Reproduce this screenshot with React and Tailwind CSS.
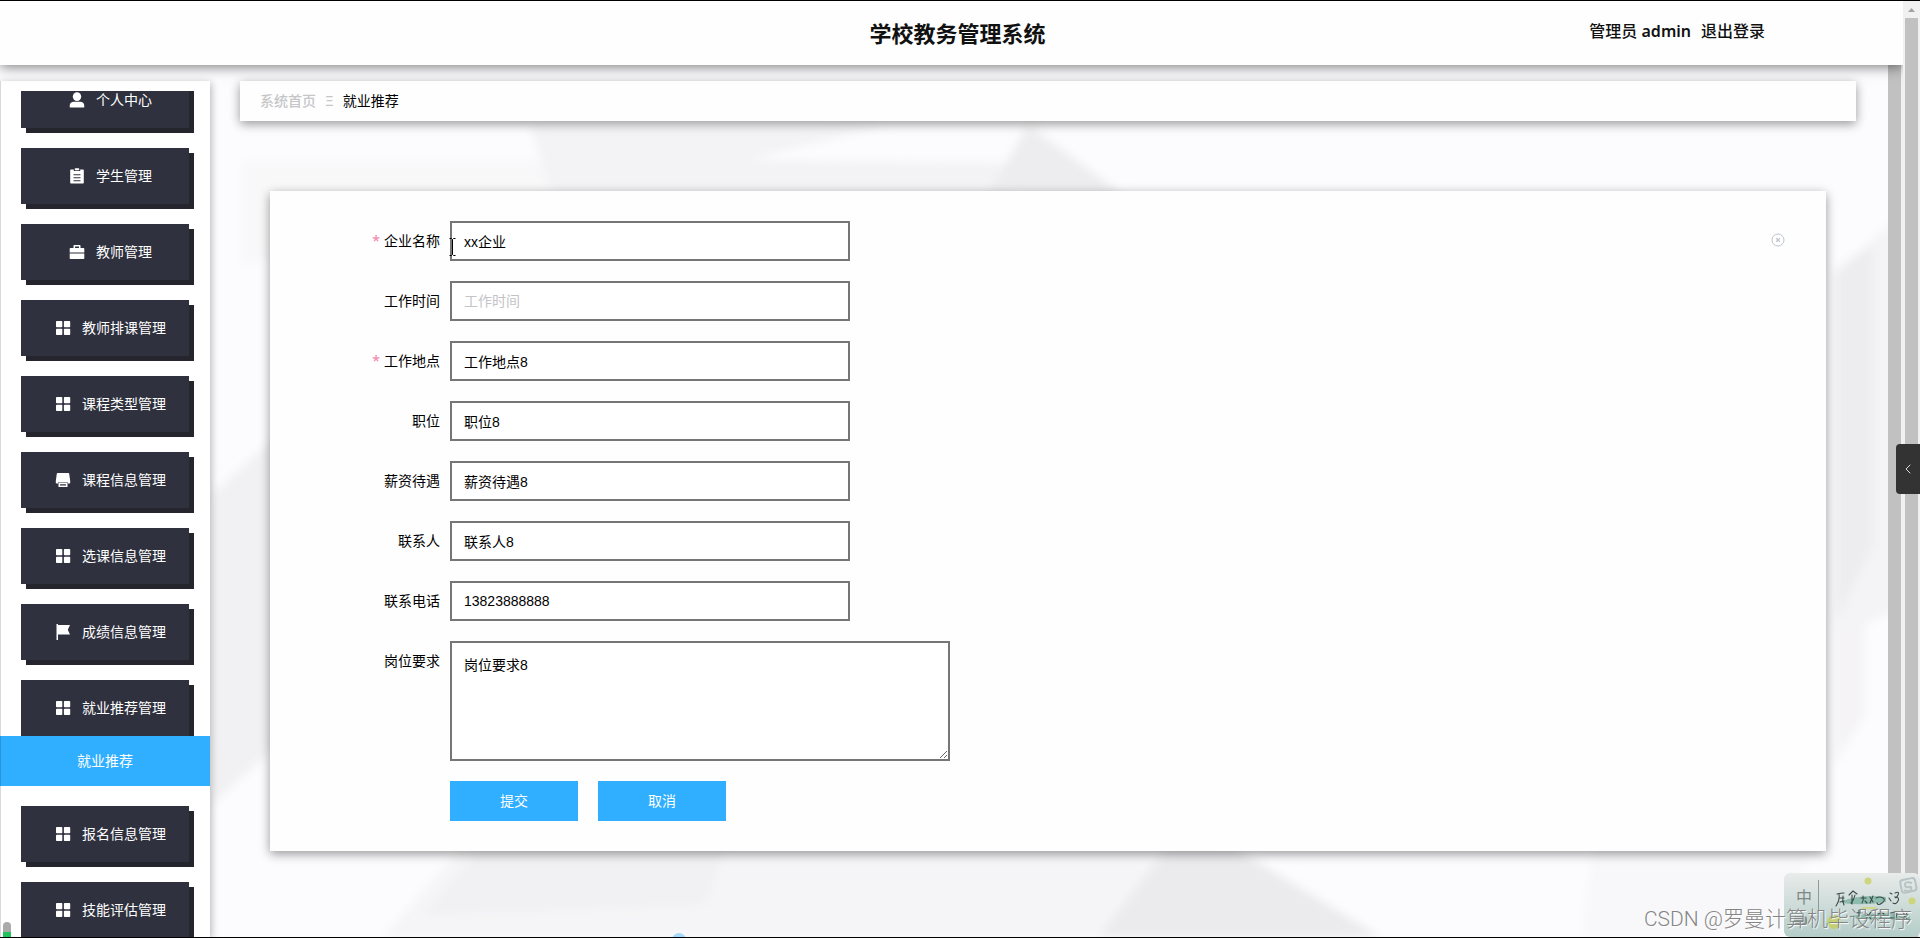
import { ChevronLeft } from 'lucide-react';

const SANS = "font-['Noto_Sans','Noto_Sans_CJK_SC',sans-serif]";

function Grid() {
  return (
    <svg viewBox="0 0 16 16" className="size-4 shrink-0" fill="currentColor" aria-hidden="true">
      <rect x="1" y="1" width="6.3" height="6.3" rx="0.8" />
      <rect x="8.9" y="1" width="6.3" height="6.3" rx="0.8" />
      <rect x="1" y="8.7" width="6.3" height="6.3" rx="0.8" />
      <rect x="8.9" y="8.7" width="6.3" height="6.3" rx="0.8" />
    </svg>
  );
}

function User() {
  return (
    <svg viewBox="0 0 16 16" className="size-4 shrink-0" fill="currentColor" aria-hidden="true">
      <ellipse cx="8" cy="4.6" rx="4.2" ry="4.4" />
      <path d="M0.8 15.5v-2.2c0-2.2 1.8-3.6 4-3.6h6.4c2.2 0 4 1.4 4 3.6v2.2z" />
    </svg>
  );
}

function Clipboard() {
  return (
    <svg viewBox="0 0 16 16" className="size-4 shrink-0" fill="currentColor" aria-hidden="true">
      <path
        fillRule="evenodd"
        d="M2 1.5h2.8v1.5h6.4v-1.5h2.8a.8.8 0 0 1 .8.8v12.4a.8.8 0 0 1-.8.8h-12a.8.8 0 0 1-.8-.8v-12.4a.8.8 0 0 1 .8-.8zM4.500 6.200v1h7v-1zM4.500 9.200v1h7v-1zM4.500 12.200v1h7v-1z"
      />
      <rect x="5.8" y="0.3" width="4.4" height="1.9" rx="0.5" />
    </svg>
  );
}

function Briefcase() {
  return (
    <svg viewBox="0 0 16 16" className="size-4 shrink-0" fill="currentColor" aria-hidden="true">
      <path
        fillRule="evenodd"
        d="M4.5 4v-2.2a.8.8 0 0 1 .8-.8h5.4a.8.8 0 0 1 .8.8v2.2h3a.8.8 0 0 1 .8.8v3.7h-14.6v-3.7a.8.8 0 0 1 .8-.8zM6 4h4v-1.600h-4z"
      />
      <path d="M.7 9.5h14.6v4.7a.8.8 0 0 1-.8.8h-13a.8.8 0 0 1-.8-.8z" />
    </svg>
  );
}

function Printer() {
  return (
    <svg viewBox="0 0 16 16" className="size-4 shrink-0" fill="currentColor" aria-hidden="true">
      <path d="M2.6 1h10.8a.8.8 0 0 1 .8.7l1 7.3v1.8a.8.8 0 0 1-.8.8h-1.4v-1.1h-10v1.1h-1.4a.8.8 0 0 1-.8-.8v-1.8l1-7.3a.8.8 0 0 1 .8-.7z" />
      <path fillRule="evenodd" d="M3.500 11h9v4h-9zM5 12.200v1.200h6v-1.200z" />
    </svg>
  );
}

function Flag() {
  return (
    <svg viewBox="0 0 16 16" className="size-4 shrink-0" fill="currentColor" aria-hidden="true">
      <path d="M1.500 0h1.500v1h12l-2.200 4.700 2.200 4.800h-12v5.500h-1.500z" />
    </svg>
  );
}

const menu = [
  { label: '个人中心', Icon: User },
  { label: '学生管理', Icon: Clipboard },
  { label: '教师管理', Icon: Briefcase },
  { label: '教师排课管理', Icon: Grid },
  { label: '课程类型管理', Icon: Grid },
  { label: '课程信息管理', Icon: Printer },
  { label: '选课信息管理', Icon: Grid },
  { label: '成绩信息管理', Icon: Flag },
  { label: '就业推荐管理', Icon: Grid, child: '就业推荐' },
  { label: '报名信息管理', Icon: Grid },
  { label: '技能评估管理', Icon: Grid },
];

const fields = [
  { id: 'company', label: '企业名称', value: 'xx企业', required: true },
  { id: 'hours', label: '工作时间', value: '' },
  { id: 'place', label: '工作地点', value: '工作地点8', required: true },
  { id: 'position', label: '职位', value: '职位8' },
  { id: 'salary', label: '薪资待遇', value: '薪资待遇8' },
  { id: 'contact', label: '联系人', value: '联系人8' },
  { id: 'phone', label: '联系电话', value: '13823888888' },
];

function Backdrop() {
  return (
    <svg
      className="absolute inset-0 size-full"
      viewBox="0 0 1888 872"
      preserveAspectRatio="none"
      aria-hidden="true"
    >
      <defs>
        <filter id="soft">
          <feGaussianBlur stdDeviation="5" />
        </filter>
      </defs>
      <rect width="1888" height="872" fill="#fcfcfe" />
      <g filter="url(#soft)">
        <path d="M240 96 560 96 560 135 240 200z" fill="#f8f8f9" />
        <path d="M525 60 880 60 740 95 1010 98 1000 135 550 135z" fill="#f3f2f5" />
        <path d="M1020 60 1115 130 980 130z" fill="#ededf0" />
        <path d="M210 430 275 370 275 680 210 740z" fill="#f1f1f4" />
        <path d="M1888 150 1820 205 1820 700 1850 650 1850 560 1888 540z" fill="#f4f3f6" />
        <path d="M1858 180 1820 210 1820 560 1858 480z" fill="#ededf0" />
        <path d="M460 780 1160 780 1100 872 380 872z" fill="#f5f5f7" />
        <path d="M480 780 720 780 700 840 420 850z" fill="#f1f1f3" />
        <path d="M1160 780 1220 780 1370 872 1090 872z" fill="#ebebee" />
        <path d="M1580 780 1800 780 1760 872 1570 872z" fill="#f8f8fa" />
      </g>
    </svg>
  );
}

function Sidebar() {
  return (
    <nav className="relative mt-4 flex w-[210px] shrink-0 flex-col bg-white pt-2.5 shadow-[1px_2px_8px_rgba(0,0,0,0.3)]">
      <div className="flex min-h-0 flex-1 flex-col justify-start overflow-hidden">
        <ul className="-mt-[19px] flex flex-col gap-5">
          {menu.map(({ label, Icon, child }) => (
            <li key={label} className="shrink-0">
              <a
                href="#"
                className="mx-[21px] flex h-14 items-center justify-center gap-[11px] bg-[#2f313e] pl-[11px] text-sm text-white shadow-[5px_5px_0_#24252d]"
              >
                <Icon />
                <span>{label}</span>
              </a>
              {child && (
                <a
                  href="#"
                  className="relative flex h-[50px] items-center justify-center bg-[#30aeff] text-sm text-white"
                >
                  {child}
                </a>
              )}
            </li>
          ))}
        </ul>
      </div>
      <div className="absolute inset-y-0 left-0 w-px bg-black/15" />
      <div className="absolute bottom-0 left-[3px] h-[15px] w-2 rounded-t-full border-b-[5px] border-[#1fc25b] bg-[#aaa]" />
    </nav>
  );
}

function Form() {
  return (
    <form className="relative flex flex-col gap-5 bg-[#fefefe] p-[30px] pl-[60px] text-sm text-black shadow-[0_3px_10px_rgba(0,0,0,0.4)]">
      {fields.map((f) => (
        <div key={f.id} className="flex">
          <label htmlFor={f.id} className="w-[120px] pr-2.5 text-right leading-10">
            {f.required && <span className="mr-1 text-[#f283a5]">*</span>}
            {f.label}
          </label>
          <input
            id={f.id}
            defaultValue={f.value}
            placeholder={f.label}
            className="h-10 w-[400px] border-2 border-[#767676] bg-white px-3 font-['Liberation_Sans','Noto_Sans_CJK_SC',sans-serif] outline-none placeholder:text-[#c4c4c8]"
          />
        </div>
      ))}
      <div className="flex">
        <label htmlFor="requirements" className="w-[120px] pr-2.5 text-right leading-10">
          岗位要求
        </label>
        <textarea
          id="requirements"
          defaultValue="岗位要求8"
          className="h-[120px] w-[500px] border-2 border-[#767676] bg-white p-3 font-['Liberation_Sans','Noto_Sans_CJK_SC',sans-serif] outline-none"
        />
      </div>
      <div className="flex gap-5 pl-[120px]">
        <button type="submit" className="h-10 w-32 bg-[#30aeff] text-white">
          提交
        </button>
        <button type="button" className="h-10 w-32 bg-[#30aeff] text-white">
          取消
        </button>
      </div>
      <button type="button" aria-label="清空" className="absolute right-[41px] top-[42px] text-[#c0c4cc]">
        <svg viewBox="0 0 14 14" className="size-3.5" fill="none" stroke="currentColor" aria-hidden="true">
          <circle cx="7" cy="7" r="6" />
          <path d="M5.300 5.300l3.400 3.400M8.700 5.300l-3.400 3.400" strokeWidth="1.300" />
        </svg>
      </button>
      <svg viewBox="0 0 7 18" className="absolute left-[179px] top-[47px] h-[18px] w-[7px]" stroke="#000" fill="none" aria-hidden="true">
        <path d="M0.500 0.500h2l1 1 1-1h2M3.500 1.500v15M0.500 17.500h2l1-1 1 1h2" />
      </svg>
    </form>
  );
}

function InputMethodBar() {
  return (
    <div className="absolute bottom-0 right-0 z-20 h-16 w-[136px] overflow-hidden rounded-md">
      <svg viewBox="0 0 136 64" className="size-full" aria-hidden="true">
        <defs>
          <linearGradient id="ime" x1="0" y1="0" x2="0" y2="1">
            <stop offset="0" stopColor="#e8ebea" />
            <stop offset="1" stopColor="#b4cdc8" />
          </linearGradient>
        </defs>
        <rect width="136" height="64" rx="4" fill="url(#ime)" />
        <path d="M34.500 7v30" stroke="#8f9a98" />
        <path d="M58 28q20-7 44-4v5q-24 4-44 1zM66 43q28-5 60-1v4q-30 2-60-1z" fill="#8dbcae" />
        <g stroke="#3b4a46" fill="none" strokeWidth="1.1" strokeLinecap="round">
          <path d="M53 21q4-1 7-1M55 21q1 6-3 12M56 25h4M59 23q-1 5 1 9M56 29l4-1M65 22l4-4 4 3M68 22v9M71 22q-1 5-4 8M77 25h5M79 23q1 4-1 7M81 28l2 2M86 24l3 5M89 23l-3 7M92 25q4-2 7 0t-1 5-5 0M106 20l2 1M105 25l2 3M111 20q5-2 3 2t-3 2q5 0 3 4t-5 2" />
          <path d="M72 40q3-1 6 0M75 37v10M82 40l5 6M87 39l-6 8M94 41q4-2 6 0M97 38v9M106 40q4-1 7 0l-1 5h-6M119 39l4 7M123 40l-5 7" />
        </g>
        <circle cx="84" cy="8" r="3.500" fill="#cdd67c" />
        <circle cx="128" cy="28" r="3.500" fill="#cdd67c" />
        <circle cx="50" cy="49" r="7" fill="#c3cf72" />
        <path d="M78 35h14" stroke="#cfd78a" strokeWidth="2" />
        <rect x="10" y="43" width="13" height="9" rx="3" fill="#81908c" />
        <rect x="117" y="6" width="15" height="13" rx="3" fill="none" stroke="#b7c4c4" strokeWidth="2" transform="rotate(-12 124 13)" />
        <path d="M128 10q-7-2-7 1.500t4 2.500 1 4q-3 1-6-1" stroke="#b7c4c4" strokeWidth="2" fill="none" />
      </svg>
      <span className="absolute left-3 top-3 text-base leading-6 text-[#7d8886]">中</span>
    </div>
  );
}

export default function App() {
  return (
    <div className={`relative flex h-screen overflow-hidden border-y border-black bg-white ${SANS}`}>
      <div className="flex min-w-0 flex-1 flex-col">
        <header className="relative z-10 flex h-16 shrink-0 items-start bg-[#fefefe] text-[#111] shadow-[0_2px_12px_rgba(0,0,0,0.5)]">
          <h1 className="flex-1 pl-3 pt-4 text-center text-[22px] font-bold leading-8">学校教务管理系统</h1>
          <div className="absolute right-[138px] top-[18px] flex gap-2.5 text-base font-medium leading-6">
            <span>
              管理员 <span className="font-semibold">admin</span>
            </span>
            <a href="#">退出登录</a>
          </div>
        </header>
        <div className="relative flex min-h-0 flex-1">
          <Backdrop />
          <Sidebar />
          <main className="relative min-w-0 flex-1 pl-[30px] pr-8 pt-4">
            <div className="flex h-10 items-center bg-[#fefefe] px-5 text-sm shadow-[0_3px_10px_rgba(0,0,0,0.4)]">
              <a href="#" className="font-medium text-[#c6c6c9]">系统首页</a>
              <span className="px-[9px] text-[#c6c6c9]">Ξ</span>
              <span className="text-black">就业推荐</span>
            </div>
            <div className="px-[30px] pt-[70px]">
              <Form />
            </div>
          </main>
          <div className="relative w-[13px] shrink-0 bg-[#c1c1c1]" />
          <div className="relative w-0.5 shrink-0 bg-[#f1f1f1]" />
        </div>
      </div>
      <div className="relative z-10 flex w-[17px] shrink-0 flex-col items-center bg-[#f1f1f1]">
        <svg viewBox="0 0 17 17" className="size-[17px]" aria-hidden="true">
          <path d="M5 11h7l-3.500-4z" fill="#a3a3a3" />
        </svg>
        <div className="w-[13px] flex-1 bg-[#c1c1c1]" />
      </div>
      <button
        type="button"
        aria-label="展开"
        className="absolute right-0 top-[443px] z-20 flex h-[50px] w-6 items-center justify-center rounded-l-sm bg-[#333] text-[#ddd]"
      >
        <ChevronLeft className="size-4" strokeWidth={1.5} />
      </button>
      <div className="absolute -bottom-2.5 left-[672px] size-3.5 rounded-full bg-[#a5d8fb]" />
      <InputMethodBar />
      <p className="absolute bottom-1 right-2 z-30 font-['Roboto','Noto_Sans_CJK_SC',sans-serif] text-[21px] font-light leading-7 text-[#858585] [text-shadow:1px_1px_1px_#fff]">
        CSDN @罗曼计算机毕设程序
      </p>
    </div>
  );
}
